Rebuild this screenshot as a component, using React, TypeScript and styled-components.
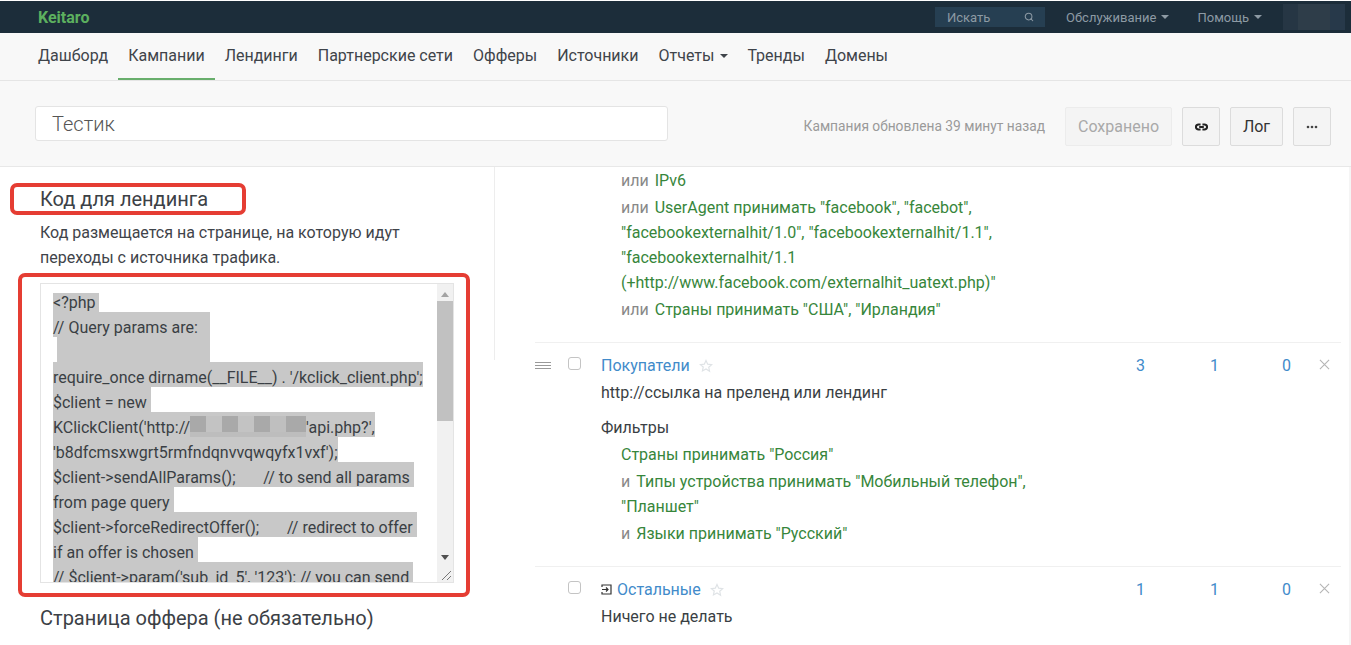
import React from 'react';
import styled, { createGlobalStyle } from 'styled-components';
import { Search } from 'lucide-react';

const Global = createGlobalStyle`
  html, body { margin: 0; padding: 0; background: #fff; }
  body { font-family: Roboto, "Liberation Sans", sans-serif; font-size: 16px; color: #3a3f44; }
  * { box-sizing: border-box; }
`;

const Page = styled.div`
  width: 1351px; height: 645px; overflow: hidden; position: relative; background: #fff;
  padding-top: 1px;
`;
const TopBar = styled.header`
  height: 32px; background: #1c2d3a; display: flex; align-items: center; padding: 0 6px 0 38px;
`;
const Logo = styled.div`
  color: #5cb05f; font-weight: 700; font-size: 16px; margin-right: auto;
`;
const SearchBox = styled.div`
  width: 110px; height: 20px; background: #263f52; color: #8d9aa4; font-size: 13px; display: flex;
  align-items: center; justify-content: space-between; padding: 0 11px 0 12px; margin-right: 21px;
`;
const TopLink = styled.div<{ $gap: number }>`
  color: #8d9aa4; font-size: 13px; display: flex; align-items: center; gap: 4px; margin-right: ${p => p.$gap}px;
`;
const Caret = styled.span`
  display: inline-block; width: 0; height: 0; border-left: 4px solid transparent;
  border-right: 4px solid transparent; border-top: 4px solid currentColor; margin: 0 -1px 0 1px;
`;
const Blurred = styled.div`
  width: 62px; height: 26px;
  background: linear-gradient(90deg, #263644 0 15px, #2e3d49 15px 47px, #27394a 47px 62px);
`;
const MainNav = styled.nav`
  height: 48px; background: #f8f8f8; border-bottom: 1px solid #e5e5e5; display: flex; padding-left: 28px;
`;
const NavItem = styled.div<{ $active?: boolean }>`
  height: 47px; padding: 0 10px; display: flex; align-items: center; gap: 5px; font-size: 16px; color: #3f444a;
  border-bottom: 2px solid ${p => (p.$active ? '#68ae6c' : 'transparent')};
`;
const TitleBar = styled.div`
  height: 86px; background: #f8f8f8; border-bottom: 1px solid #e8e8e8; display: flex; align-items: center;
  padding: 0 20px 0 35px;
`;
const TitleInput = styled.div`
  width: 633px; height: 35px; background: #fff; border: 1px solid #e4e4e4; border-radius: 3px;
  font-size: 20px; font-weight: 300; color: #555; padding-left: 16px; display: flex; align-items: center;
  margin-right: auto;
`;
const Updated = styled.div`
  font-size: 13.75px; color: #9a9a9a; margin-right: 10px; margin-top: 5px;
`;
const Btn = styled.div<{ $w: number; $disabled?: boolean }>`
  width: ${p => p.$w}px; height: 39px; margin-left: 10px; margin-top: 6px; display: flex; align-items: center; justify-content: center;
  background: #f4f4f4; border: 1px solid ${p => (p.$disabled ? '#ececec' : '#dcdcdc')}; border-radius: 2px;
  font-size: 16px; color: ${p => (p.$disabled ? '#a9a9a9' : '#333')};
`;
const Columns = styled.div`
  display: flex; height: 478px;
`;
const Left = styled.section`
  width: 495px; padding: 20px 0 0 40px; flex: none; position: relative;
`;
const Heading = styled.h3`
  margin: 0; font-size: 20px; font-weight: 400; line-height: 24px; color: #3c4146;
`;
const Desc = styled.p`
  margin: 9px 0 13px; font-size: 16px; line-height: 25px; width: 400px; color: #3f444a;
`;
const CodeBox = styled.div`
  width: 414px; height: 300px; border: 1px solid #e4e4e4; display: flex; overflow: hidden; margin-bottom: 23px;
`;
const Code = styled.div`
  flex: 1; padding: 9px 0 0 12px; overflow: hidden; font-size: 16px; line-height: 25px; color: #3a3f44;
`;
const CodeLine = styled.div<{ $first?: boolean }>`
  display: flex; height: ${p => (p.$first ? 19 : 25)}px; line-height: ${p => (p.$first ? 19 : 25)}px; white-space: pre;
`;
const Sel = styled.span<{ $inset?: number; $first?: boolean }>`
  display: block; height: 100%; background: #c8c8c8; margin-left: ${p => p.$inset ?? 0}px;
  padding-top: ${p => (p.$first ? 0 : 2.5)}px;
`;
const Mosaic = styled.span`
  display: inline-block; width: 116px; height: 22px; vertical-align: top; margin-top: 1.5px;
  background:
    linear-gradient(90deg, #a9a9a9 0 16px, #c3c3c3 16px 32px, #a9a9a9 32px 48px, #c3c3c3 48px 64px, #a9a9a9 64px 80px, #bfbfbf 80px 96px, #a9a9a9 96px) 0 0 / 100% 16px no-repeat,
    #bdbdbd;
`;
const Scrollbar = styled.div`
  width: 16px; flex: none; background: #f1f1f1; display: flex; flex-direction: column; align-items: center; position: relative;
`;
const ArrowUp = styled.span`
  width: 0; height: 0; margin: 8px 0 4px; border-left: 4px solid transparent; border-right: 4px solid transparent;
  border-bottom: 5px solid #a3a3a3;
`;
const Thumb = styled.div`
  width: 100%; height: 120px; background: #c1c1c1;
`;
const ArrowDown = styled.span`
  width: 0; height: 0; margin-top: 134px; border-left: 4px solid transparent; border-right: 4px solid transparent;
  border-top: 5px solid #505050;
`;
const Resizer = styled.svg`
  position: absolute; right: 0; bottom: 0; width: 16px; height: 16px;
`;
const Annotation = styled.div<{ $left: number; $top: number; $w: number; $h: number }>`
  position: absolute; left: ${p => p.$left}px; top: ${p => p.$top}px; width: ${p => p.$w}px; height: ${p => p.$h}px;
  border: 4px solid #e53d33; border-radius: 7px; pointer-events: none;
`;
const Right = styled.section`
  flex: 1; min-width: 0; position: relative; padding: 0 10px 0 40px;
`;
const RuleDivider = styled.div`
  position: absolute; left: -1px; top: 0; height: 193px; width: 1px; background: #ededed;
`;
const Filters = styled.div`
  padding: 1px 0 0 86px; width: 480px;
`;
const Cond = styled.div`
  color: #37863b; font-size: 16px; line-height: 25px; margin-bottom: 2px;
`;
const Or = styled.span`
  color: #888; margin-right: 6px;
`;
const Rule = styled.div<{ $height: number; $mt?: number }>`
  display: grid; grid-template-columns: 33px 33px 1fr 74px 74px 72px 37px;
  border-top: 1px solid #f0f0f0; height: ${p => p.$height}px; padding-top: 11px; margin-top: ${p => p.$mt ?? 0}px;
`;
const DragCell = styled.div`
  padding-top: 8px;
`;
const Drag = styled.div`
  width: 16px; height: 7px; border-top: 1px solid #999; border-bottom: 1px solid #999; position: relative;
  &::after { content: ''; position: absolute; left: 0; right: 0; top: 2px; height: 1px; background: #999; }
`;
const CheckCell = styled.div``;
const Check = styled.div`
  width: 13px; height: 13px; border: 1px solid #c4c4c4; border-radius: 3px; background: #fff; margin-top: 3px;
`;
const Body = styled.div`
  min-width: 0;
`;
const NameRow = styled.div`
  display: flex; align-items: center; height: 23px; color: #428bca; font-size: 16px;
`;
const Star = styled.svg`
  width: 14px; height: 14px; margin-left: 9px;
`;
const Enter = styled.svg`
  width: 11px; height: 11px; margin-right: 5px;
`;
const Url = styled.div`
  font-size: 16px; line-height: 23px; color: #3a3f44; margin-top: 4px;
`;
const FLabel = styled.div`
  font-size: 16px; line-height: 25px; margin-top: 11px; color: #3a3f44;
`;
const SubCond = styled.div`
  padding-left: 20px; width: 440px; color: #37863b; line-height: 25px; margin-top: 2px;
`;
const Count = styled.div`
  color: #428bca; font-size: 16px; text-align: right; padding-right: 13px; line-height: 23px;
`;
const Close = styled.svg`
  width: 11px; height: 11px; margin: 5px 0 0 15px;
`;
const RightEdge = styled.div`
  position: absolute; right: 0; top: 167px; bottom: 0; width: 2px; background: #f5f5f5;
`;

const starIcon = (
  <Star viewBox="0 0 24 24" fill="none" stroke="#dfe3e6" strokeWidth="2">
    <path d="M12 2.5l2.9 6.3 6.9.8-5.1 4.6 1.4 6.8L12 17.1 5.9 20.5l1.4-6.8L2.2 9.6l6.9-.8z" />
  </Star>
);
const closeIcon = (
  <Close viewBox="0 0 12 12" stroke="#b5b5b5" strokeWidth="1.2">
    <path d="M1 1l10 10M11 1L1 11" />
  </Close>
);

const nav = ['Дашборд', 'Кампании', 'Лендинги', 'Партнерские сети', 'Офферы', 'Источники', 'Отчеты', 'Тренды', 'Домены'];

export default function App() {
  return (
    <Page>
      <Global />
      <TopBar>
        <Logo>Keitaro</Logo>
        <SearchBox>Искать<Search size={10} strokeWidth={2.5} /></SearchBox>
        <TopLink $gap={29}>Обслуживание <Caret /></TopLink>
        <TopLink $gap={22}>Помощь <Caret /></TopLink>
        <Blurred />
      </TopBar>
      <MainNav>
        {nav.map(n => (
          <NavItem key={n} $active={n === 'Кампании'}>{n}{n === 'Отчеты' && <Caret />}</NavItem>
        ))}
      </MainNav>
      <TitleBar>
        <TitleInput>Тестик</TitleInput>
        <Updated>Кампания обновлена 39 минут назад</Updated>
        <Btn $w={107} $disabled>Сохранено</Btn>
        <Btn $w={38}>
          <svg width="13" height="8" viewBox="0 0 14 8" fill="none" stroke="#222" strokeWidth="2.2">
            <path d="M6 1.2H3.8a2.8 2.8 0 0 0 0 5.6H6M8 1.2h2.2a2.8 2.8 0 0 1 0 5.6H8M4.5 4h5" />
          </svg>
        </Btn>
        <Btn $w={53}>Лог</Btn>
        <Btn $w={38}>
          <svg width="12" height="4" viewBox="0 0 12 4" fill="#444">
            <circle cx="2" cy="2" r="1.3" /><circle cx="6" cy="2" r="1.3" /><circle cx="10" cy="2" r="1.3" />
          </svg>
        </Btn>
      </TitleBar>
      <Columns>
        <Left>
          <Heading>Код для лендинга</Heading>
          <Desc>Код размещается на странице, на которую идут переходы с источника трафика.</Desc>
          <CodeBox>
            <Code>
              <CodeLine $first><Sel $first>{'<?php '}</Sel></CodeLine>
              <CodeLine><Sel>{'// Query params are:   '}</Sel></CodeLine>
              <CodeLine><Sel $inset={4} style={{ width: 153 }} /></CodeLine>
              <CodeLine><Sel>{"require_once dirname(__FILE__) . '/kclick_client.php';"}</Sel></CodeLine>
              <CodeLine><Sel>{'$client = new '}</Sel></CodeLine>
              <CodeLine><Sel>{"KClickClient('http://"}<Mosaic />{"'api.php?',"}</Sel></CodeLine>
              <CodeLine><Sel>{"'b8dfcmsxwgrt5rmfndqnvvqwqyfx1vxf');"}</Sel></CodeLine>
              <CodeLine><Sel>{'$client->sendAllParams();       // to send all params '}</Sel></CodeLine>
              <CodeLine><Sel>{'from page query '}</Sel></CodeLine>
              <CodeLine><Sel>{'$client->forceRedirectOffer();       // redirect to offer '}</Sel></CodeLine>
              <CodeLine><Sel>{'if an offer is chosen '}</Sel></CodeLine>
              <CodeLine><Sel>{"// $client->param('sub_id_5', '123'); // you can send "}</Sel></CodeLine>
            </Code>
            <Scrollbar>
              <ArrowUp />
              <Thumb />
              <ArrowDown />
              <Resizer viewBox="0 0 16 16" stroke="#777" strokeWidth="1">
                <path d="M5 14L14 5M10 14l4-4" />
              </Resizer>
            </Scrollbar>
          </CodeBox>
          <Heading>Страница оффера (не обязательно)</Heading>
          <Annotation $left={10} $top={16} $w={236} $h={32} />
          <Annotation $left={18} $top={106} $w={452} $h={324} />
        </Left>
        <Right>
          <RuleDivider />
          <Filters>
            <Cond><Or>или</Or>IPv6</Cond>
            <Cond><Or>или</Or>UserAgent принимать "facebook", "facebot", "facebookexternalhit/1.0", "facebookexternalhit/1.1", "facebookexternalhit/1.1 (+http://www.facebook.com/externalhit_uatext.php)"</Cond>
            <Cond><Or>или</Or>Страны принимать "США", "Ирландия"</Cond>
          </Filters>
          <Rule $height={224} $mt={20}>
            <DragCell><Drag /></DragCell>
            <CheckCell><Check /></CheckCell>
            <Body>
              <NameRow>Покупатели {starIcon}</NameRow>
              <Url>http://ссылка на преленд или лендинг</Url>
              <FLabel>Фильтры</FLabel>
              <SubCond>Страны принимать "Россия"</SubCond>
              <SubCond><Or>и</Or>Типы устройства принимать "Мобильный телефон", "Планшет"</SubCond>
              <SubCond><Or>и</Or>Языки принимать "Русский"</SubCond>
            </Body>
            <Count>3</Count><Count>1</Count><Count>0</Count>
            {closeIcon}
          </Rule>
          <Rule $height={100}>
            <div />
            <CheckCell><Check /></CheckCell>
            <Body>
              <NameRow>
                <Enter viewBox="0 0 11 11" fill="none" stroke="#333" strokeWidth="1.2">
                  <path d="M1 3V1h9v9H1V8M1 5.5h5.5M5 3.5l2 2-2 2" />
                </Enter>
                Остальные {starIcon}
              </NameRow>
              <Url>Ничего не делать</Url>
            </Body>
            <Count>1</Count><Count>1</Count><Count>0</Count>
            {closeIcon}
          </Rule>
        </Right>
      </Columns>
      <RightEdge />
    </Page>
  );
}
